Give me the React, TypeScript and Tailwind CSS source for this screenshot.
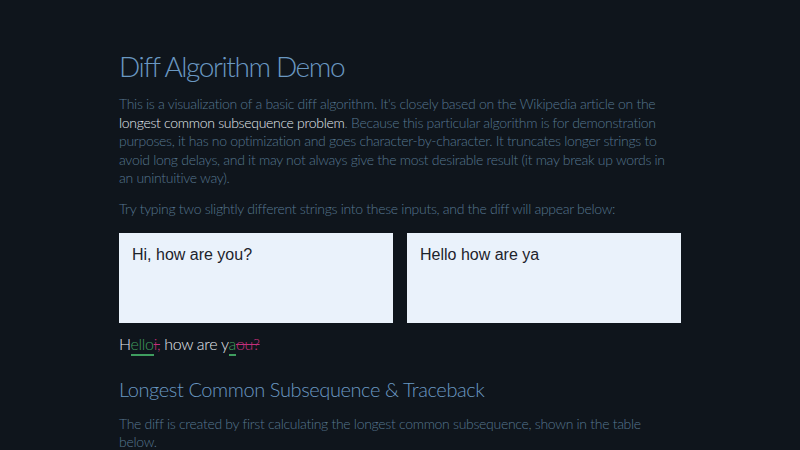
import React from "react";

export default function App() {
  const font = { fontFamily: "Lato, 'Open Sans', sans-serif" };
  return (
    <div className="min-h-[450px] bg-[#0f151c] font-light" style={font}>
      <div className="mx-auto w-[562px] pt-[46px]">
        <h1 className="text-[28px] leading-[40px] tracking-[-1.4px] text-[#6a98c2] font-light">Diff Algorithm Demo</h1>
        <p className="mt-[9px] text-[14px] leading-[18.6px] tracking-[-0.3px] text-[#56758f]">
          This is a visualization of a basic diff algorithm. It's closely based on the Wikipedia article on the{" "}
          <span className="text-[#e3e9ef]">longest common subsequence problem</span>. Because this particular algorithm is for demonstration purposes, it has no optimization and goes character-by-character. It truncates longer strings to avoid long delays, and it may not always give the most desirable result (it may break up words in an unintuitive way).
        </p>
        <p className="mt-[12px] text-[14px] leading-[18.6px] tracking-[-0.3px] text-[#56758f]">
          Try typing two slightly different strings into these inputs, and the diff will appear below:
        </p>
        <div className="mt-[14px] flex gap-[14px]">
          <textarea
            defaultValue="Hi, how are you?"
            className="h-[90px] w-[274px] resize-none bg-[#eaf2fb] px-[13px] py-[10px] text-[16px] text-[#1d232b] outline-none"
            style={{ fontFamily: "'Liberation Sans', Arial, sans-serif" }}
          />
          <textarea
            defaultValue="Hello how are ya"
            className="h-[90px] w-[274px] resize-none bg-[#eaf2fb] px-[13px] py-[10px] text-[16px] text-[#1d232b] outline-none"
            style={{ fontFamily: "'Liberation Sans', Arial, sans-serif" }}
          />
        </div>
        <div className="mt-[10px] text-[16px] leading-[22px] tracking-[-0.3px] text-[#e4e8ec] font-light">
          <span>H</span>
          <span className="text-[#3f9d5f] border-b-2 border-[#3f9d5f] pb-[1px]">ello</span>
          <span className="text-[#c2307a] line-through">i,</span>
          <span> how are y</span>
          <span className="text-[#3f9d5f] border-b-2 border-[#3f9d5f] pb-[1px]">a</span>
          <span className="text-[#c2307a] line-through">ou?</span>
        </div>
        <h2 className="mt-[20px] text-[20px] leading-[28px] tracking-[-0.4px] text-[#6a98c2] font-light">
          Longest Common Subsequence &amp; Traceback
        </h2>
        <p className="mt-[12px] text-[14px] leading-[18.6px] tracking-[-0.3px] text-[#56758f]">
          The diff is created by first calculating the longest common subsequence, shown in the table below.
        </p>
      </div>
    </div>
  );
}
